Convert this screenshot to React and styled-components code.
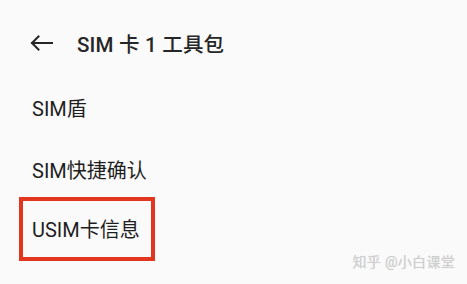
import React from "react";
import styled, { createGlobalStyle } from "styled-components";

const GlobalStyle = createGlobalStyle`
  html, body {
    margin: 0;
    padding: 0;
    background: #fafafa;
  }
  body {
    font-family: Roboto, "Noto Sans CJK SC", sans-serif;
    color: #1e1e1e;
  }
`;

const Page = styled.div`
  position: relative;
  width: 467px;
  height: 284px;
  overflow: hidden;
  background: #fafafa;
`;

const Header = styled.div`
  display: flex;
  align-items: center;
  height: 26px;
  padding: 30px 0 20px 30px;
`;

const BackButton = styled.button`
  display: flex;
  align-items: center;
  padding: 0;
  border: none;
  background: none;
  color: #262626;
  margin-right: 24px;
`;

const Title = styled.h1`
  margin: 0;
  font-size: 20.5px;
  font-weight: 500;
  letter-spacing: 0.2px;
  color: #262626;
`;

const List = styled.div`
  display: flex;
  flex-direction: column;
`;

const Row = styled.div`
  display: flex;
  align-items: center;
  height: 62px;
  padding-left: ${(p) => (p.$marked ? "19px" : "32px")};
`;

const Label = styled.span`
  font-size: 20px;
  color: #1e1e1e;
`;

const Marked = styled.div`
  display: flex;
  align-items: center;
  box-sizing: border-box;
  height: 64px;
  margin-top: -5px;
  padding: 0 11px 0 9px;
  border: 4px solid #e2361f;
`;

const Watermark = styled.div`
  position: absolute;
  right: 12px;
  bottom: 13px;
  font-size: 14px;
  color: #cfcfcf;
  text-shadow: 0 0 1px rgba(0, 0, 0, 0.15);
  letter-spacing: 0.3px;
`;

function BackArrow() {
  return (
    <svg width="23" height="16" viewBox="0 0 23 16" fill="none">
      <path
        d="M22 8H2M8.5 1.5L2 8l6.5 6.5"
        stroke="currentColor"
        strokeWidth="2"
        strokeLinecap="square"
      />
    </svg>
  );
}

export default function App() {
  return (
    <Page>
      <GlobalStyle />
      <Header>
        <BackButton>
          <BackArrow />
        </BackButton>
        <Title>SIM 卡 1 工具包</Title>
      </Header>
      <List>
        <Row>
          <Label>SIM盾</Label>
        </Row>
        <Row>
          <Label>SIM快捷确认</Label>
        </Row>
        <Row $marked>
          <Marked>
            <Label>USIM卡信息</Label>
          </Marked>
        </Row>
      </List>
      <Watermark>知乎 @小白课堂</Watermark>
    </Page>
  );
}
